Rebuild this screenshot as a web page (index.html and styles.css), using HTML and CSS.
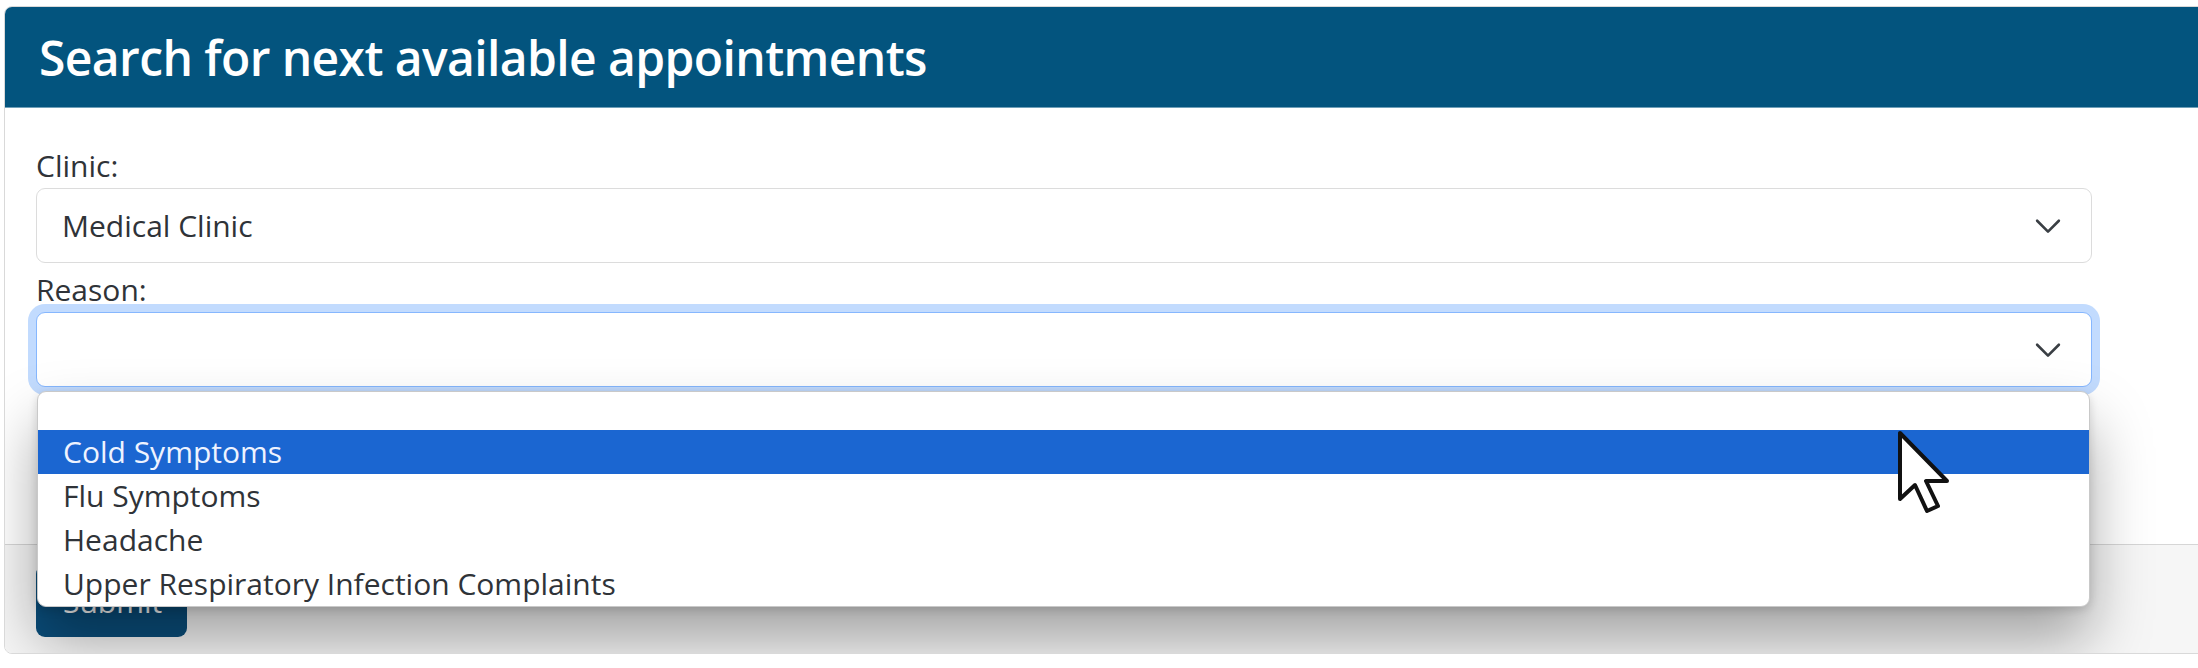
FILE: index.html
```html
<!DOCTYPE html>
<html lang="en">
<head>
<meta charset="utf-8">
<title>Search for next available appointments</title>
<link rel="stylesheet" href="styles.css">
</head>
<body>
<div class="page">
  <div class="card">
    <div class="card-header">
      <h1 class="title">Search for next available appointments</h1>
    </div>
    <div class="card-body">
      <div class="form">
        <label class="label">Clinic:</label>
        <div class="select">
          <span class="select-value">Medical Clinic</span>
          <svg class="chevron" width="30" height="30" viewBox="0 0 16 16"><path d="M2.2 5.2l5.8 5.8 5.8-5.8" fill="none" stroke="#3a3f44" stroke-width="1.4" stroke-linecap="round" stroke-linejoin="round"/></svg>
        </div>
        <label class="label label-gap">Reason:</label>
        <div class="select-wrap">
          <div class="select select-focus">
            <span class="select-value"></span>
            <svg class="chevron" width="30" height="30" viewBox="0 0 16 16"><path d="M2.2 5.2l5.8 5.8 5.8-5.8" fill="none" stroke="#3a3f44" stroke-width="1.4" stroke-linecap="round" stroke-linejoin="round"/></svg>
          </div>
          <ul class="dropdown">
            <li class="option option-empty"></li>
            <li class="option option-active">Cold Symptoms</li>
            <li class="option">Flu Symptoms</li>
            <li class="option">Headache</li>
            <li class="option">Upper Respiratory Infection Complaints</li>
          </ul>
        </div>
      </div>
    </div>
    <div class="card-footer">
      <button class="btn" type="button">Submit</button>
    </div>
  </div>
</div>
<svg class="cursor" width="56" height="86" viewBox="-4 -4 56 86"><path d="M0 0 L0 66 L15 52 L27 78 L38 73 L26 48 L47 48 Z" fill="#ffffff" stroke="#111111" stroke-width="4" stroke-linejoin="round"/></svg>
</body>
</html>
```

FILE: styles.css
```css
html, body {
  margin: 0;
  padding: 0;
  overflow: hidden;
  background: #ffffff;
}

body {
  font-family: "Open Sans", "Noto Sans", sans-serif;
  color: #2b2f33;
  position: relative;
  width: 2198px;
  height: 668px;
}

.page {
  padding: 6px 0 0 4px;
}

.card {
  width: 2240px;
  border: 1px solid #d9d9d9;
  border-radius: 8px;
  background: #ffffff;
  overflow: hidden;
}

.card-header {
  background: #03547e;
  border-bottom: 1px solid #6f9fb8;
  padding: 22px 34px 20px;
}

.title {
  margin: 0;
  font-size: 48px;
  line-height: 58px;
  font-weight: 600;
  color: #ffffff;
  letter-spacing: -0.6px;
}

.card-body {
  padding: 35px 31px 157px;
}

.form {
  width: 2056px;
}

.label {
  display: block;
  font-size: 30px;
  line-height: 45px;
  color: #2f3338;
}

.label-gap {
  margin-top: 4px;
}

.select {
  box-sizing: border-box;
  height: 75px;
  border: 1px solid #dcdcdc;
  border-radius: 9px;
  background: #ffffff;
  display: flex;
  align-items: center;
  justify-content: space-between;
  padding: 0 28px 0 25px;
  font-size: 30px;
  line-height: 45px;
  color: #2f3338;
}

.select-focus {
  border-color: #86b7fe;
  box-shadow: 0 0 0 8px rgba(13, 110, 253, 0.25);
}

.select-wrap {
  position: relative;
}

.chevron {
  display: block;
  flex: none;
}

.dropdown {
  position: absolute;
  top: calc(100% + 4px);
  left: 1px;
  right: 2px;
  margin: 0;
  padding: 0;
  list-style: none;
  background: #ffffff;
  border: 1px solid #c9c9c9;
  border-radius: 9px;
  overflow: hidden;
  box-shadow: 0 34px 60px rgba(0, 0, 0, 0.34), 0 3px 10px rgba(0, 0, 0, 0.14);
  z-index: 2;
}

.option {
  height: 44px;
  padding: 0 25px;
  font-size: 30px;
  line-height: 44px;
  color: #2f3338;
  white-space: nowrap;
}

.option-empty {
  height: 38px;
}

.option-active {
  background: #1b66d1;
  color: #eef3ff;
}

.card-footer {
  background: #f6f6f6;
  border-top: 1px solid #d6d6d6;
  padding: 20px 31px 16px;
}

.btn {
  display: block;
  box-sizing: border-box;
  width: 151px;
  height: 72px;
  padding: 0 0 0 27px;
  text-align: left;
  border: none;
  border-radius: 9px;
  background: #0a4e7c;
  color: #ffffff;
  font-family: "Open Sans", "Noto Sans", sans-serif;
  font-size: 30px;
  line-height: 45px;
}

.cursor {
  position: absolute;
  left: 1896px;
  top: 429px;
  z-index: 5;
}
```
